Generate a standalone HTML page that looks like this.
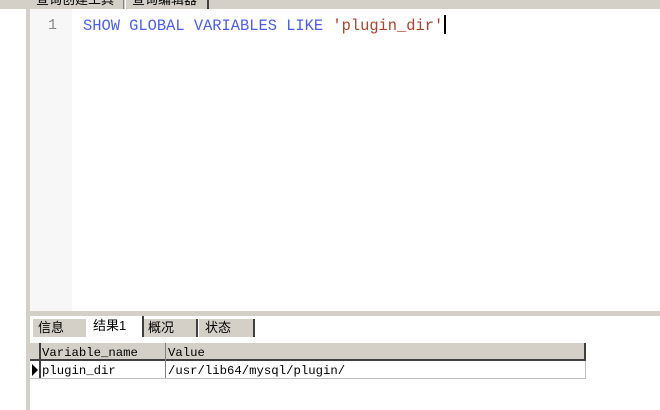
<!DOCTYPE html><html><head><style>
body{margin:0;width:660px;height:410px;position:relative;background:#fff;overflow:hidden;font-family:"Liberation Sans","Noto Sans CJK SC",sans-serif}
div{position:absolute;box-sizing:border-box}
.m{font-family:"Liberation Mono",monospace}
</style></head><body>
<div style="left:0;top:0;width:660px;height:9px;background:#d4d0c8"></div>
<div style="left:30px;top:-8px;width:94px;height:17px;background:#d4d0c8;border-right:1px solid #808080;font-size:13px;line-height:15px;padding-left:6px;color:#000">查询创建工具</div>
<div style="left:125px;top:-8px;width:84px;height:17px;background:#d4d0c8;border-left:1px solid #fff;border-right:2px solid #404040;font-size:13px;line-height:15px;padding-left:6px">查询编辑器</div>
<div style="left:26px;top:9px;width:4px;height:401px;background:#d4d0c8"></div>
<div style="left:30px;top:9px;width:42px;height:303px;background:#f7f7f7"></div>
<div class="m" style="left:48px;top:17px;font-size:15px;color:#888">1</div>
<div class="m" style="left:83px;top:17px;font-size:15.4px;color:#4a5cff;white-space:pre">SHOW GLOBAL VARIABLES LIKE <span style="color:#b3402a">'plugin_dir'</span></div>
<div style="left:444px;top:15px;width:2px;height:19px;background:#000"></div>
<div style="left:30px;top:311px;width:630px;height:5px;background:#d4d0c8"></div>
<div style="left:30px;top:316px;width:630px;height:94px;background:#fff"></div>
<div style="left:33px;top:319px;width:53px;height:18px;background:#d4d0c8;font-size:13px;line-height:18px;padding-left:5px">信息</div>
<div style="left:86px;top:316px;width:58px;height:21px;background:#fff;border-left:1px solid #fff;border-right:2px solid #404040;font-size:13px;line-height:20px;padding-left:6px">结果1</div>
<div style="left:144px;top:319px;width:54px;height:18px;background:#d4d0c8;border-right:2px solid #404040;font-size:13px;line-height:18px;padding-left:4px">概况</div>
<div style="left:198px;top:319px;width:57px;height:18px;background:#d4d0c8;border-left:1px solid #fff;border-right:2px solid #404040;font-size:13px;line-height:18px;padding-left:6px">状态</div>
<div style="left:30px;top:343px;width:556px;height:18px;background:#d4d0c8;border-bottom:2px solid #404040;border-right:2px solid #404040"></div>
<div style="left:39px;top:343px;width:2px;height:36px;background:#404040"></div>
<div style="left:165px;top:343px;width:1px;height:36px;background:#808080"></div>
<div class="m" style="left:42px;top:346px;font-size:12.3px">Variable_name</div>
<div class="m" style="left:168px;top:346px;font-size:12.3px">Value</div>
<div style="left:30px;top:361px;width:556px;height:18px;border-bottom:1px solid #c0c0c0;border-right:1px solid #c0c0c0"></div>
<div style="left:32px;top:364px;width:0;height:0;border-top:6px solid transparent;border-bottom:6px solid transparent;border-left:6px solid #000"></div>
<div class="m" style="left:42px;top:364px;font-size:12.3px">plugin_dir</div>
<div class="m" style="left:168px;top:364px;font-size:12.3px">/usr/lib64/mysql/plugin/</div>
</body></html>
